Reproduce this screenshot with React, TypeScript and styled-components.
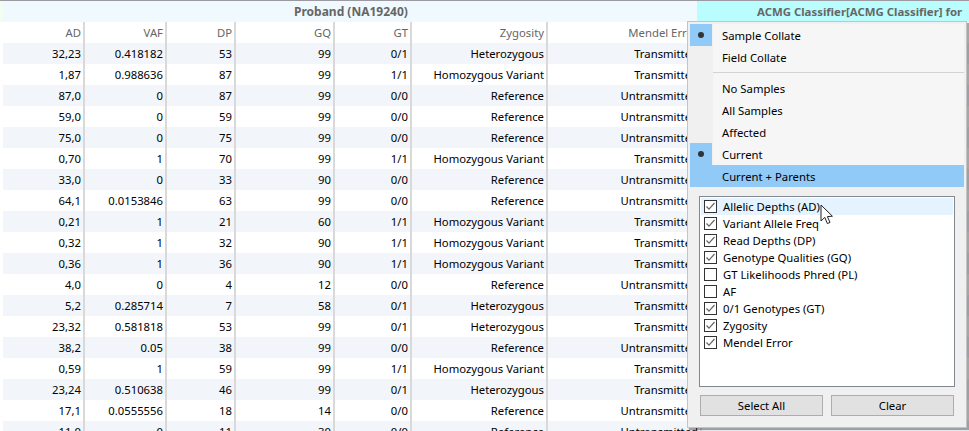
import React from "react";
import styled, { createGlobalStyle } from "styled-components";

const Global = createGlobalStyle`
  html, body { margin: 0; padding: 0; background: #fff; }
  body { font-family: "Noto Sans", "Open Sans", sans-serif; font-size: 11.3px; color: #000; }
`;

const Page = styled.div`
  position: relative;
  width: 969px;
  height: 431px;
  overflow: hidden;
  background: #fff;
`;

const columns = "3px 82px 82px 69px 99px 77px 136px 154px 395px";

const GroupBar = styled.div`
  display: grid;
  grid-template-columns: 3px 694px 400px;
  height: 21px;
  border-top: 1px solid #9a9aa0;
  font-weight: 700;
  color: #666;
  line-height: 21px;
`;
const GroupStrip = styled.div`
  background: #f0fff0;
`;
const GroupCell = styled.div<{ $tone: string; $pad: string; $size: string }>`
  background: ${(p) => p.$tone};
  padding-left: ${(p) => p.$pad};
  font-size: ${(p) => p.$size};
  white-space: nowrap;
`;

const Row = styled.div<{ $stripe?: boolean }>`
  display: grid;
  grid-template-columns: ${columns};
  height: 21px;
  background: ${(p) => (p.$stripe ? "#f2f5fa" : "#fff")};
`;
const HeadRow = styled(Row)`
  color: #666;
`;
const Cell = styled.div`
  box-sizing: border-box;
  border-right: 2px solid #d9d9d9;
  padding-right: 2px;
  text-align: right;
  line-height: 22px;
  white-space: nowrap;
  overflow: hidden;
`;
const Gutter = styled.div`
  background: #fff;
`;

const Popup = styled.div`
  position: absolute;
  left: 687px;
  top: 21px;
  box-sizing: border-box;
  width: 280px;
  height: 407px;
  padding: 2px;
  background: #f0f0f0;
  border: 1px solid #c4c4c4;
  box-shadow: 2px 2px 1px rgba(0, 0, 0, 0.35);
`;
const Menu = styled.div`
  background: linear-gradient(90deg, #f0f0f0 23px, #f6f6f6 23px);
`;
const Item = styled.div<{ $hover?: boolean }>`
  display: flex;
  align-items: center;
  height: 22px;
  background: ${(p) => (p.$hover ? "#91c9f7" : "transparent")};
`;
const Mark = styled.div<{ $on?: boolean }>`
  display: flex;
  align-items: center;
  justify-content: center;
  width: 22px;
  height: 100%;
  margin-right: 10px;
  background: ${(p) => (p.$on ? "#91c9f7" : "transparent")};
`;
const Dot = styled.span`
  width: 6px;
  height: 6px;
  border-radius: 50%;
  background: #333;
`;
const Separator = styled.div`
  height: 9px;
  margin-left: 23px;
  box-sizing: border-box;
  padding-top: 4px;
  &::after {
    content: "";
    display: block;
    height: 1px;
    background: #d2d2d2;
  }
`;
const ListBox = styled.div`
  box-sizing: border-box;
  height: 191px;
  margin: 9px 9px 0;
  padding: 1px;
  background: #fff;
  border: 1px solid #828790;
`;
const ListRow = styled.div<{ $hover?: boolean }>`
  display: flex;
  align-items: center;
  gap: 6px;
  height: 17px;
  padding-left: 3px;
  background: ${(p) => (p.$hover ? "#e5f3ff" : "transparent")};
`;
const Box = styled.div`
  box-sizing: border-box;
  width: 13px;
  height: 13px;
  border: 1px solid #333;
  background: #fff;
  display: flex;
`;
const Buttons = styled.div`
  display: flex;
  gap: 8px;
  margin: 8px 10px 0;
`;
const Btn = styled.div`
  box-sizing: border-box;
  width: 123px;
  height: 21px;
  background: #e1e1e1;
  border: 1px solid #adadad;
  text-align: center;
  line-height: 20px;
`;
const Cursor = styled.svg`
  position: absolute;
  left: 820px;
  top: 204px;
`;

const H = "Heterozygous", V = "Homozygous Variant", R = "Reference";
const T = "Transmitted", U = "Untransmitted";
const data: string[][] = [
  ["32,23", "0.418182", "53", "99", "0/1", H, T],
  ["1,87", "0.988636", "87", "99", "1/1", V, T],
  ["87,0", "0", "87", "99", "0/0", R, U],
  ["59,0", "0", "59", "99", "0/0", R, U],
  ["75,0", "0", "75", "99", "0/0", R, U],
  ["0,70", "1", "70", "99", "1/1", V, T],
  ["33,0", "0", "33", "90", "0/0", R, U],
  ["64,1", "0.0153846", "63", "99", "0/0", R, U],
  ["0,21", "1", "21", "60", "1/1", V, T],
  ["0,32", "1", "32", "90", "1/1", V, T],
  ["0,36", "1", "36", "90", "1/1", V, T],
  ["4,0", "0", "4", "12", "0/0", R, U],
  ["5,2", "0.285714", "7", "58", "0/1", H, T],
  ["23,32", "0.581818", "53", "99", "0/1", H, T],
  ["38,2", "0.05", "38", "99", "0/0", R, U],
  ["0,59", "1", "59", "99", "1/1", V, T],
  ["23,24", "0.510638", "46", "99", "0/1", H, T],
  ["17,1", "0.0555556", "18", "14", "0/0", R, U],
  ["11,0", "0", "11", "30", "0/0", R, U],
];

const head = ["AD", "VAF", "DP", "GQ", "GT", "Zygosity", "Mendel Error"];

const fields: [string, boolean][] = [
  ["Allelic Depths (AD)", true],
  ["Variant Allele Freq", true],
  ["Read Depths (DP)", true],
  ["Genotype Qualities (GQ)", true],
  ["GT Likelihoods Phred (PL)", false],
  ["AF", false],
  ["0/1 Genotypes (GT)", true],
  ["Zygosity", true],
  ["Mendel Error", true],
];

export default function App() {
  return (
    <Page>
      <Global />
      <GroupBar>
        <GroupStrip />
        <GroupCell $tone="#f0fafe" $pad="291px" $size="12px">Proband (NA19240)</GroupCell>
        <GroupCell $tone="#b9fdff" $pad="60px" $size="11.4px">ACMG Classifier[ACMG Classifier] for</GroupCell>
      </GroupBar>
      <HeadRow>
        <Gutter />
        {head.map((h) => (
          <Cell key={h}>{h}</Cell>
        ))}
      </HeadRow>
      {data.map((r, i) => (
        <Row key={i} $stripe={i % 2 === 0}>
          <Gutter />
          {r.map((c, j) => (
            <Cell key={j}>{c}</Cell>
          ))}
        </Row>
      ))}
      <Popup>
        <Menu>
          <Item><Mark $on><Dot /></Mark>Sample Collate</Item>
          <Item><Mark />Field Collate</Item>
          <Separator />
          <Item><Mark />No Samples</Item>
          <Item><Mark />All Samples</Item>
          <Item><Mark />Affected</Item>
          <Item><Mark $on><Dot /></Mark>Current</Item>
          <Item $hover><Mark />Current + Parents</Item>
        </Menu>
        <ListBox>
          {fields.map(([f, on], i) => (
            <ListRow key={f} $hover={i === 0}>
              <Box>
                {on && (
                  <svg width="11" height="11" viewBox="0 0 11 11">
                    <path d="M1.5 5.5 L4 8.2 L9.5 2" fill="none" stroke="#666" strokeWidth="1.2" />
                  </svg>
                )}
              </Box>
              {f}
            </ListRow>
          ))}
        </ListBox>
        <Buttons>
          <Btn>Select All</Btn>
          <Btn>Clear</Btn>
        </Buttons>
      </Popup>
      <Cursor width="14" height="22" viewBox="0 0 14 22">
        <path d="M1 1 L1 17 L4.8 13.4 L7.4 19.6 L10 18.4 L7.4 12.6 L12.4 12.2 Z" fill="#fff" stroke="#222" strokeWidth="1" />
      </Cursor>
    </Page>
  );
}
